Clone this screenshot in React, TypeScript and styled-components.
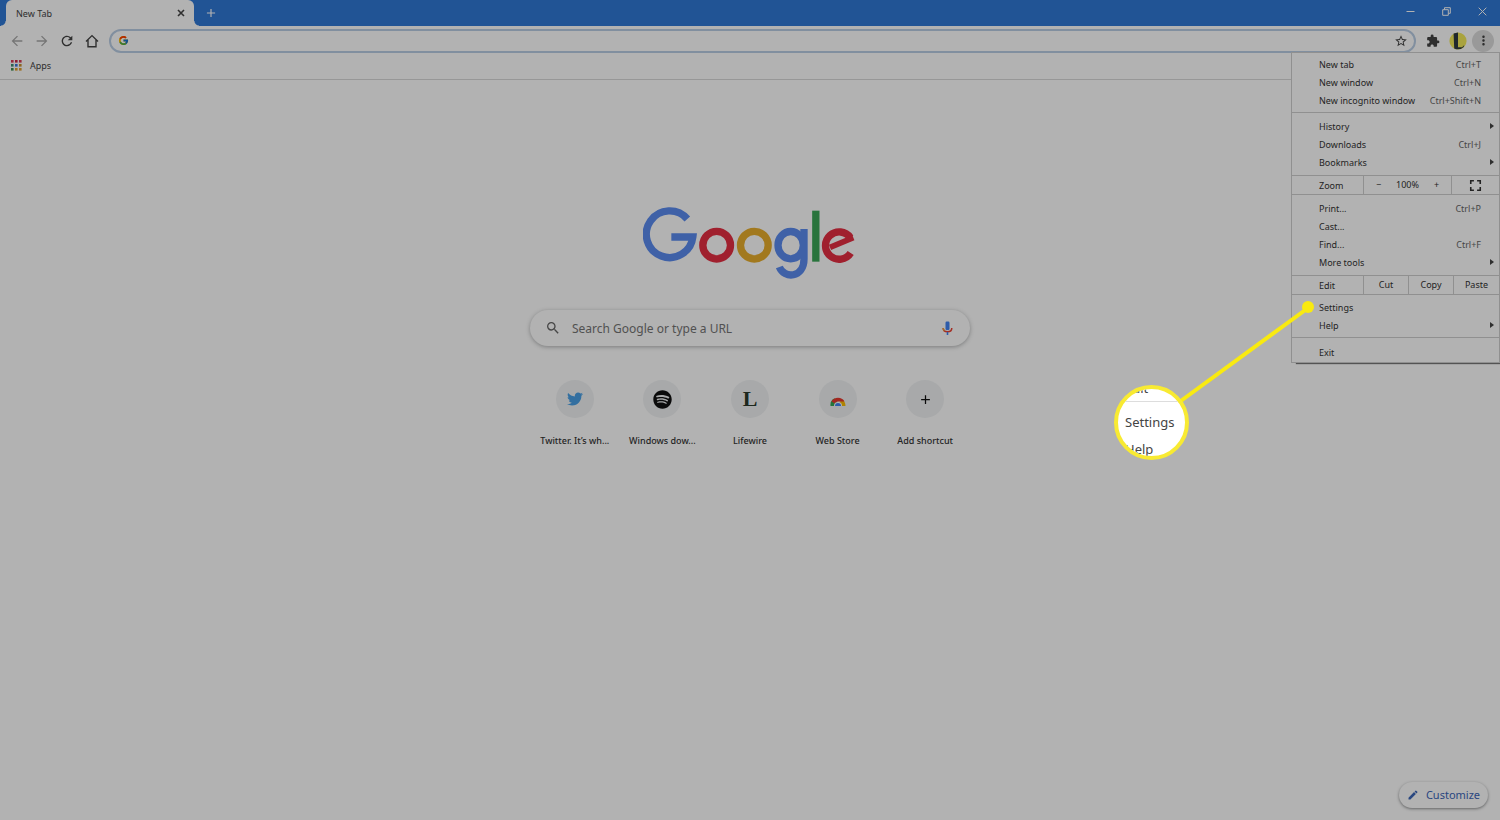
import React from "react";
import styled, { createGlobalStyle } from "styled-components";
import {
  MdArrowBack,
  MdArrowForward,
  MdRefresh,
  MdStarBorder,
  MdExtension,
  MdMoreVert,
  MdSearch,
  MdEdit,
  MdAdd,
  MdFullscreen,
} from "react-icons/md";
import { FaTwitter, FaSpotify } from "react-icons/fa";
import { FcGoogle } from "react-icons/fc";

const GlobalStyle = createGlobalStyle`
  *, *::before, *::after { box-sizing: border-box; }
  body { margin: 0; background: #fff; }
  body, button, input { font-family: "Noto Sans", "Open Sans", sans-serif; }
  button, input { margin: 0; padding: 0; border: 0; background: none; color: inherit; }
  svg { display: block; flex: none; }
`;

const Page = styled.div`
  position: relative;
  display: flex;
  flex-direction: column;
  min-height: 100vh;
  overflow: hidden;
  color: #333;
  font-size: 9px;
`;

const TitleBar = styled.header`
  display: flex;
  height: 26px;
  padding-left: 6px;
  background: #3079d6;
  color: #fff;
`;

const Tab = styled.div`
  position: relative;
  display: flex;
  align-items: center;
  justify-content: space-between;
  width: 188px;
  padding: 0 9px 0 10px;
  border-radius: 6px 6px 0 0;
  background: #fff;
  color: #444;

  &::before, &::after {
    content: "";
    position: absolute;
    bottom: 0;
    width: 5px;
    height: 5px;
  }
  &::before {
    right: 100%;
    background: radial-gradient(circle at 0 0, transparent 4px, #fff 5px);
  }
  &::after {
    left: 100%;
    background: radial-gradient(circle at 100% 0, transparent 4px, #fff 5px);
  }
`;

const PlainButton = styled.button`
  display: flex;
  align-items: center;
  justify-content: center;
  color: inherit;
`;

const NewTabButton = styled(PlainButton)`
  width: 34px;
`;

const WindowButtons = styled.div`
  display: flex;
  height: 22px;
  margin-left: auto;
`;

const WindowButton = styled(PlainButton)`
  width: 36px;
`;

const Toolbar = styled.div`
  display: flex;
  align-items: center;
  height: 29px;
  padding: 0 6px 0 4px;
  color: #444;
`;

const NavButton = styled(PlainButton)<{ $muted?: boolean }>`
  width: 25px;
  height: 22px;
  color: ${(p) => (p.$muted ? "#a8a8a8" : "#444")};
`;

const Omnibox = styled.div`
  display: flex;
  flex: 1;
  align-items: center;
  gap: 8px;
  height: 24px;
  margin: 0 3px 0 5px;
  padding: 0 6px 0 7px;
  border: 2px solid #b9cde4;
  border-radius: 12px;

  input {
    flex: 1;
    font-size: 10px;
    outline: none;
  }
`;

const GoogleMark = styled(FcGoogle)`
  width: 11px;
  height: 11px;
`;

const ToolButton = styled(PlainButton)<{ $active?: boolean }>`
  width: 22px;
  height: 22px;
  margin-left: 3px;
  border-radius: 50%;
  background: ${(p) => (p.$active ? "#dcdcdc" : "none")};
`;

const Bookmarks = styled.nav`
  display: flex;
  align-items: center;
  height: 25px;
  padding: 0 11px 4px;
  border-bottom: 1px solid #d8d8d8;
`;

const BookmarkLink = styled.a`
  display: flex;
  align-items: center;
  gap: 8px;
  color: #444;
  text-decoration: none;
`;

const Content = styled.main`
  display: flex;
  flex: 1;
  flex-direction: column;
  align-items: center;
  padding-top: 127px;
`;

const SearchBox = styled.div`
  display: flex;
  align-items: center;
  width: 440px;
  height: 36px;
  margin-top: 31px;
  padding: 0 17px 0 15px;
  border-radius: 18px;
  box-shadow: 0 1px 4px rgba(32, 33, 36, 0.35);
  color: #666;

  input {
    flex: 1;
    margin-left: 11px;
    font-size: 12px;
    outline: none;
  }
  input::placeholder { color: #757575; opacity: 1; }
`;

const Shortcuts = styled.div`
  display: grid;
  grid-template-columns: repeat(5, 1fr);
  width: 438px;
  margin-top: 34px;
`;

const Shortcut = styled.a`
  display: flex;
  flex-direction: column;
  align-items: center;
  gap: 16px;
  color: #333;
  font-weight: 500;
  line-height: 14px;
  text-decoration: none;
  white-space: nowrap;
`;

const ShortcutIcon = styled.span`
  display: flex;
  align-items: center;
  justify-content: center;
  width: 38px;
  height: 38px;
  border-radius: 50%;
  background: #f1f3f4;
  color: #111;
`;

const SerifInitial = styled.span`
  color: #2b3a2c;
  font: bold 22px/22px "Liberation Serif", serif;
`;

const Footer = styled.footer`
  display: flex;
  justify-content: flex-end;
  padding: 0 12px 12px;
`;

const CustomizeButton = styled(PlainButton)`
  gap: 7px;
  width: 89px;
  height: 26px;
  border-radius: 13px;
  box-shadow: 0 1px 3px rgba(32, 33, 36, 0.5);
  color: #3c66b8;
  font-size: 11px;
  line-height: 24px;
`;

const Menu = styled.div`
  position: absolute;
  top: 52px;
  right: 0;
  width: 209px;
  border: 1px solid #cfcfcf;
  background: #fff;
  box-shadow: 4px 2px 1px -1px #777;
`;

const MenuGroup = styled.div`
  padding: 4px 0;
  border-bottom: 1px solid #cfcfcf;

  &:first-child { padding: 2px 0 3px; }
  &:nth-last-child(2) { padding: 3px 0; }
  &:last-child { padding: 5px 0 1px; border-bottom: 0; }
`;

const MenuItem = styled.button`
  display: flex;
  align-items: center;
  justify-content: space-between;
  width: 100%;
  height: 18px;
  padding: 0 18px 0 27px;
  font-size: 9px;
  text-align: left;
`;

const Shortkey = styled.span`
  color: #666;
`;

const Arrow = styled.span`
  margin-right: -13px;
  border: 3px solid transparent;
  border-right: 0;
  border-left: 4px solid #444;
`;

const MenuStrip = styled.div`
  display: flex;
  height: 19px;
  padding-left: 27px;
  border-bottom: 1px solid #cfcfcf;
  line-height: 18px;
`;

const StripLabel = styled.span`
  width: 44px;
  line-height: 20px;
`;

const StripCell = styled.div<{ $width: number }>`
  display: flex;
  align-items: center;
  justify-content: center;
  gap: 15px;
  width: ${(p) => p.$width}px;
  border-left: 1px solid #cfcfcf;
`;

const StripButton = styled(PlainButton)`
  font-size: 9px;
  line-height: 18px;
`;

const Dim = styled.div`
  position: absolute;
  inset: 0;
  background: rgba(0, 0, 0, 0.3);
  pointer-events: none;
`;

const CalloutLine = styled.svg`
  position: absolute;
  top: 290px;
  right: 180px;
  pointer-events: none;
`;

const Magnifier = styled.div`
  position: absolute;
  top: 385px;
  right: 311px;
  width: 75px;
  height: 75px;
  padding-left: 7px;
  border: 4px solid #f8ea32;
  border-radius: 50%;
  overflow: hidden;
  background: #fff;
  color: #444;
  font-size: 13px;
  line-height: 27px;
  pointer-events: none;
`;

const MagnifiedRow = styled.div<{ $divider?: boolean }>`
  height: 27px;
  margin: ${(p) => (p.$divider ? "-14px -4px 7px -7px" : "0")};
  padding-left: ${(p) => (p.$divider ? "7px" : "0")};
  border-bottom: ${(p) => (p.$divider ? "1px solid #ddd" : "0")};
`;

const HomeIcon = () => (
  <svg width="14" height="14" viewBox="0 0 14 14" fill="none" stroke="currentColor" strokeWidth="1.4">
    <path d="M1 7.4 7 1.6l6 5.8M3 6v6.8h8V6" />
  </svg>
);

const AppsIcon = () => {
  const colors = ["#d93a55", "#c92c48", "#d93a55", "#3f8f72", "#3c78d8", "#c9902f", "#3f8f50", "#e0a030", "#e0a030"];
  return (
    <svg width="11" height="11" viewBox="0 0 11 11">
      {colors.map((c, i) => (
        <rect key={i} x={(i % 3) * 4} y={Math.floor(i / 3) * 4} width="2.6" height="2.6" fill={c} />
      ))}
    </svg>
  );
};

const AvatarIcon = () => (
  <svg width="18" height="18" viewBox="0 0 18 18">
    <circle cx="9" cy="9" r="8.6" fill="#f2ea5a" />
    <path d="M4.6 1.6 9 .4V14q3.400 .6 6.400-.6l-1.200 2q-4.200 3.200-9 1z" fill="#2f3a40" />
    <path d="M9 13.600q3 .6 5.800-1.200l-1.400 2.800H9z" fill="#f2ea5a" />
  </svg>
);

const CloseTabIcon = () => (
  <svg width="8" height="8" viewBox="0 0 8 8" stroke="currentColor" strokeWidth="1.6">
    <path d="m1 1 6 6M7 1 1 7" />
  </svg>
);

const MinimizeIcon = () => (
  <svg width="9" height="9" viewBox="0 0 9 9" stroke="currentColor">
    <path d="M.5 4.500h8" />
  </svg>
);

const RestoreIcon = () => (
  <svg width="9" height="9" viewBox="0 0 9 9" fill="none" stroke="currentColor">
    <path d="M.7 2.700h5.600v5.600H.7zM2.500 2.500V.7h5.800v5.600H6.500" />
  </svg>
);

const CloseWindowIcon = () => (
  <svg width="9" height="9" viewBox="0 0 9 9" stroke="currentColor">
    <path d="m.7.7 7.600 7.600M8.300.7.7 8.300" />
  </svg>
);

const GoogleLogo = () => (
  <svg width="214" height="72" viewBox="39 36 642 216" fill="none" strokeWidth="22" role="img" aria-label="Google">
    <path stroke="#5b8cf0" d="M172 72A70 70 0 1 0 188.500 126H124" />
    <circle stroke="#e62e42" cx="260" cy="150.500" r="41.500" />
    <circle stroke="#e8ae2c" cx="373" cy="150.500" r="41.500" />
    <ellipse stroke="#5b8cf0" cx="482" cy="150.500" rx="38" ry="41" />
    <path stroke="#5b8cf0" d="M522 102V192C522 250 462 252 448 216" />
    <path stroke="#3aa657" d="M557.500 47V200" />
    <path stroke="#e62e42" d="M662 174A41 41 0 1 1 661 128" />
    <path stroke="#e62e42" strokeWidth="17" d="M670 128 600 157" />
  </svg>
);

const MicIcon = () => (
  <svg width="11" height="15" viewBox="0 0 11 15" fill="none">
    <rect x="3.500" y=".5" width="4" height="8.500" rx="1.200" fill="#4285f4" />
    <path d="M1.200 7c0 5 8.600 5 8.600 0" stroke="#ea4335" strokeWidth="1.500" />
    <path d="M1.200 7q0 1.600 1.200 2.700" stroke="#e8a33d" strokeWidth="1.500" />
    <path d="M5.500 11v3" stroke="#4285f4" strokeWidth="1.600" />
  </svg>
);

const WebStoreIcon = () => (
  <svg width="16" height="16" viewBox="0 0 16 16">
    <path d="M.5 15a7.500 7.500 0 0 1 4-7.700L8 12l-3 3z" fill="#34a853" />
    <path d="M15.500 15A7.500 7.500 0 0 0 12 8.500L9 12l2 3z" fill="#fbbc05" />
    <path d="M1.500 10.500a7.500 7.500 0 0 1 13 0H8a3.500 3.500 0 0 0-3.200 2z" fill="#e8382f" />
    <path d="M4 15a4 4 0 0 1 8 0z" fill="#fff" />
    <path d="M5 15a3 3 0 0 1 6 0z" fill="#4285f4" />
  </svg>
);

type Entry = { label: string; keys?: string; sub?: boolean };

const Group = ({ items }: { items: Entry[] }) => (
  <MenuGroup>
    {items.map((it) => (
      <MenuItem key={it.label} role="menuitem">
        {it.label}
        {it.keys && <Shortkey>{it.keys}</Shortkey>}
        {it.sub && <Arrow />}
      </MenuItem>
    ))}
  </MenuGroup>
);

const shortcuts = [
  { label: "Twitter. It’s wh...", icon: <FaTwitter size={16} color="#4aa0e6" /> },
  { label: "Windows dow...", icon: <FaSpotify size={19} /> },
  { label: "Lifewire", icon: <SerifInitial>L</SerifInitial> },
  { label: "Web Store", icon: <WebStoreIcon /> },
  { label: "Add shortcut", icon: <MdAdd size={15} /> },
];

export default function App() {
  return (
    <Page>
      <GlobalStyle />
      <TitleBar>
        <Tab>
          New Tab
          <PlainButton aria-label="Close tab"><CloseTabIcon /></PlainButton>
        </Tab>
        <NewTabButton aria-label="New tab"><MdAdd size={14} /></NewTabButton>
        <WindowButtons>
          <WindowButton aria-label="Minimize"><MinimizeIcon /></WindowButton>
          <WindowButton aria-label="Restore"><RestoreIcon /></WindowButton>
          <WindowButton aria-label="Close window"><CloseWindowIcon /></WindowButton>
        </WindowButtons>
      </TitleBar>
      <Toolbar>
        <NavButton $muted aria-label="Back"><MdArrowBack size={16} /></NavButton>
        <NavButton $muted aria-label="Forward"><MdArrowForward size={16} /></NavButton>
        <NavButton aria-label="Reload"><MdRefresh size={16} /></NavButton>
        <NavButton aria-label="Home"><HomeIcon /></NavButton>
        <Omnibox>
          <GoogleMark />
          <input aria-label="Address bar" />
          <PlainButton aria-label="Bookmark this tab"><MdStarBorder size={14} /></PlainButton>
        </Omnibox>
        <ToolButton aria-label="Extensions"><MdExtension size={14} /></ToolButton>
        <ToolButton aria-label="Profile"><AvatarIcon /></ToolButton>
        <ToolButton $active aria-label="Chrome menu"><MdMoreVert size={15} /></ToolButton>
      </Toolbar>
      <Bookmarks>
        <BookmarkLink href="#apps"><AppsIcon />Apps</BookmarkLink>
      </Bookmarks>
      <Content>
        <GoogleLogo />
        <SearchBox>
          <MdSearch size={16} />
          <input aria-label="Search" placeholder="Search Google or type a URL" />
          <PlainButton aria-label="Search by voice"><MicIcon /></PlainButton>
        </SearchBox>
        <Shortcuts>
          {shortcuts.map((s) => (
            <Shortcut key={s.label} href="#shortcut">
              <ShortcutIcon>{s.icon}</ShortcutIcon>
              {s.label}
            </Shortcut>
          ))}
        </Shortcuts>
      </Content>
      <Footer>
        <CustomizeButton><MdEdit size={12} />Customize</CustomizeButton>
      </Footer>
      <Menu role="menu">
        <Group
          items={[
            { label: "New tab", keys: "Ctrl+T" },
            { label: "New window", keys: "Ctrl+N" },
            { label: "New incognito window", keys: "Ctrl+Shift+N" },
          ]}
        />
        <Group
          items={[
            { label: "History", sub: true },
            { label: "Downloads", keys: "Ctrl+J" },
            { label: "Bookmarks", sub: true },
          ]}
        />
        <MenuStrip>
          <StripLabel>Zoom</StripLabel>
          <StripCell $width={88}>
            <StripButton aria-label="Zoom out">−</StripButton>
            <span>100%</span>
            <StripButton aria-label="Zoom in">+</StripButton>
          </StripCell>
          <StripCell $width={48}>
            <StripButton aria-label="Full screen"><MdFullscreen size={19} /></StripButton>
          </StripCell>
        </MenuStrip>
        <Group
          items={[
            { label: "Print...", keys: "Ctrl+P" },
            { label: "Cast..." },
            { label: "Find...", keys: "Ctrl+F" },
            { label: "More tools", sub: true },
          ]}
        />
        <MenuStrip>
          <StripLabel>Edit</StripLabel>
          <StripCell $width={45}><StripButton>Cut</StripButton></StripCell>
          <StripCell $width={45}><StripButton>Copy</StripButton></StripCell>
          <StripCell $width={46}><StripButton>Paste</StripButton></StripCell>
        </MenuStrip>
        <Group items={[{ label: "Settings" }, { label: "Help", sub: true }]} />
        <Group items={[{ label: "Exit" }]} />
      </Menu>
      <Dim />
      <CalloutLine width="150" height="120" viewBox="1170 290 150 120">
        <path d="M1178 403 1308 308" stroke="#f9ea10" strokeWidth="4" />
        <circle cx="1308" cy="307" r="6" fill="#f9ea10" />
      </CalloutLine>
      <Magnifier aria-hidden="true">
        <MagnifiedRow $divider>Edit</MagnifiedRow>
        <MagnifiedRow>Settings</MagnifiedRow>
        <MagnifiedRow>Help</MagnifiedRow>
      </Magnifier>
    </Page>
  );
}
